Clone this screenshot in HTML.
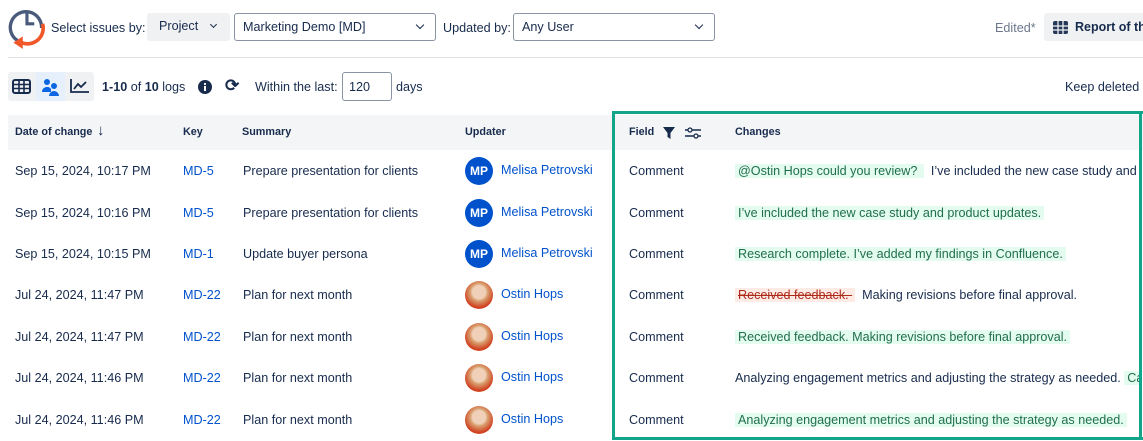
<!DOCTYPE html>
<html><head><meta charset="utf-8"><style>
*{box-sizing:border-box;margin:0;padding:0}
body{width:1143px;height:441px;overflow:hidden;background:#fff;font-family:"Liberation Sans",sans-serif;font-size:12.6px;color:#172b4d;position:relative}
.a{position:absolute;white-space:nowrap}
.dd{position:absolute;border:1px solid #8993a4;border-radius:3px;height:28px;padding:6px 8px;font-size:12.6px}
.chev{position:absolute;right:12px;top:8px;width:6px;height:6px;border-right:1.6px solid #172b4d;border-bottom:1.6px solid #172b4d;transform:rotate(45deg)}
.hd{position:absolute;top:115px;left:8px;width:1135px;height:35px;background:#f4f5f7}
.th{position:absolute;top:126px;font-size:10.8px;font-weight:bold;color:#172b4d}
.link{color:#0052cc}
.av{position:absolute;width:28px;height:28px;border-radius:50%;background:#0052cc;color:#fff;font-weight:bold;font-size:12px;text-align:center;line-height:28px}
.av2{background:radial-gradient(circle at 50% 40%,#f0d0b8 0 30%,#d9a070 40%,#d04020 70%,#f08040 100%)}
.g{background:#e3fcef;color:#216e4e;padding:2px 3px}
.r{background:#ffebe6;color:#ae2a19;text-decoration:line-through;padding:2px 3px}
</style></head><body>
<svg class="a" style="left:8px;top:3px" width="40" height="48" viewBox="0 0 36 46">
<path d="M8 36 A15 15 0 1 1 31 24" fill="none" stroke="#4a5a7a" stroke-width="3.2"/>
<path d="M17 9 V20 H24" fill="none" stroke="#4a5a7a" stroke-width="3"/>
<path d="M32 20 A15 15 0 0 1 12 38" fill="none" stroke="#f0582a" stroke-width="3.5"/>
<path d="M4 38 L13 32 L13 44 Z" fill="#f0582a"/>
</svg>
<div class="a" style="left:51px;top:21px">Select issues by:</div>
<div class="a" style="left:147px;top:13px;width:83px;height:28px;background:#f0f1f3;border-radius:3px;padding:6px 12px;font-size:12.6px">Project<span class="chev" style="right:14px;top:9px;width:5px;height:5px"></span></div>
<div class="dd" style="left:234px;top:13px;width:202px">Marketing Demo [MD]<span class="chev"></span></div>
<div class="a" style="left:443px;top:21px">Updated by:</div>
<div class="dd" style="left:513px;top:13px;width:202px">Any User<span class="chev"></span></div>
<div class="a" style="left:995px;top:21px;color:#6b778c">Edited*</div>
<div class="a" style="left:1044px;top:13px;width:110px;height:28px;background:#f0f1f3;border-radius:3px"></div>
<svg class="a" style="left:1052px;top:20px" width="17" height="15"><rect x="1" y="1" width="15" height="13" rx="2" fill="#253858"/><path d="M1 6H16M1 10H16M6 1V14M11 1V14" stroke="#f0f1f3" stroke-width="1.3"/></svg>
<div class="a" style="left:1075px;top:20px;font-weight:bold;font-size:12.5px">Report of the</div>
<div class="a" style="left:8px;top:57px;width:1135px;height:1px;background:#dfe1e6"></div>

<div class="a" style="left:8px;top:72px;width:86px;height:29px;background:#f0f1f3;border-radius:3px"></div>
<div class="a" style="left:36px;top:72px;width:29px;height:29px;background:#e6effc"></div>
<svg class="a" style="left:12px;top:79px" width="20" height="16"><rect x="1" y="1" width="17" height="13" rx="2" fill="none" stroke="#172b4d" stroke-width="2"/><path d="M1 5.5H18M1 9.5H18M7 1V14M12 1V14" stroke="#172b4d" stroke-width="1.6"/></svg>
<svg class="a" style="left:41px;top:78px" width="20" height="18"><circle cx="6" cy="4" r="3" fill="#0c66e4"/><circle cx="13" cy="8" r="3" fill="#0c66e4"/><path d="M1 14a5 5 0 0 1 9-3v3z" fill="#0c66e4"/><path d="M8 18a5 5 0 0 1 10 0z" fill="#0c66e4"/></svg>
<svg class="a" style="left:70px;top:78px" width="20" height="16"><path d="M1 1V14H19" fill="none" stroke="#172b4d" stroke-width="1.8"/><path d="M4 11L8 6L11 9L16 4" fill="none" stroke="#172b4d" stroke-width="1.8"/></svg>
<div class="a" style="left:102px;top:80px"><b>1-10</b> of <b>10</b> logs</div>
<svg class="a" style="left:198px;top:80px" width="14" height="14"><circle cx="7" cy="7" r="7" fill="#172b4d"/><rect x="6" y="6" width="2" height="5" fill="#fff"/><circle cx="7" cy="4" r="1.1" fill="#fff"/></svg>
<div class="a" style="left:225px;top:76px;font-size:17px;font-weight:bold">⟳</div>
<div class="a" style="left:255px;top:80px">Within the last:</div>
<div class="a" style="left:342px;top:72px;width:50px;height:29px;border:1px solid #8993a4;border-radius:3px;padding:7px 6px">120</div>
<div class="a" style="left:396px;top:80px">days</div>
<div class="a" style="left:1065px;top:80px">Keep deleted i</div>

<div class="hd"></div>
<div class="th" style="left:15px">Date of change</div>
<div class="a" style="left:97px;top:122px;font-size:15px">↓</div>
<div class="th" style="left:183px">Key</div>
<div class="th" style="left:242px">Summary</div>
<div class="th" style="left:465px">Updater</div>
<div class="th" style="left:629px">Field</div>
<svg class="a" style="left:662px;top:126px" width="40" height="14"><path d="M1 1H13L8.5 7V13L5.5 11V7Z" fill="#172b4d"/><path d="M23 4H39M23 10H39" stroke="#172b4d" stroke-width="1.4"/><circle cx="28" cy="4" r="2" fill="#f4f5f7" stroke="#172b4d" stroke-width="1.3"/><circle cx="34" cy="10" r="2" fill="#f4f5f7" stroke="#172b4d" stroke-width="1.3"/></svg>
<div class="th" style="left:735px">Changes</div>

<div id="rows"></div>
<div class="a" style="left:612px;top:111px;width:531px;height:329px;border:3px solid #13a589;border-right:none"></div>
<div class="a" style="left:1139px;top:111px;width:3px;height:329px;background:#13a589"></div>
<script>
var d=[["Sep 15, 2024, 10:17 PM","MD-5","Prepare presentation for clients",0,'<span class="g">@Ostin Hops could you review? </span>&nbsp; I’ve included the new case study and pr'],
["Sep 15, 2024, 10:16 PM","MD-5","Prepare presentation for clients",0,'<span class="g">I’ve included the new case study and product updates.</span>'],
["Sep 15, 2024, 10:15 PM","MD-1","Update buyer persona",0,'<span class="g">Research complete. I’ve added my findings in Confluence.</span>'],
["Jul 24, 2024, 11:47 PM","MD-22","Plan for next month",1,'<span class="r">Received feedback. </span>&nbsp; Making revisions before final approval.'],
["Jul 24, 2024, 11:47 PM","MD-22","Plan for next month",1,'<span class="g">Received feedback. Making revisions before final approval.</span>'],
["Jul 24, 2024, 11:46 PM","MD-22","Plan for next month",1,'Analyzing engagement metrics and adjusting the strategy as needed. <span class="g">Ca</span>'],
["Jul 24, 2024, 11:46 PM","MD-22","Plan for next month",1,'<span class="g">Analyzing engagement metrics and adjusting the strategy as needed.</span>']];
var h="",ys=[171,213,254,295,337,378,420];
d.forEach(function(r,i){var y=ys[i]-7;
h+='<div class="a" style="left:15px;top:'+y+'px">'+r[0]+'</div><div class="a link" style="left:183px;top:'+y+'px">'+r[1]+'</div><div class="a" style="left:243px;top:'+y+'px">'+r[2]+'</div>';
h+=r[3]?'<div class="av av2" style="left:465px;top:'+(ys[i]-14)+'px"></div><div class="a link" style="left:501px;top:'+(y-1)+'px">Ostin Hops</div>':'<div class="av" style="left:465px;top:'+(ys[i]-14)+'px">MP</div><div class="a link" style="left:501px;top:'+(y-1)+'px">Melisa Petrovski</div>';
h+='<div class="a" style="left:629px;top:'+y+'px">Comment</div><div class="a" style="left:735px;top:'+y+'px;width:404px;overflow:hidden">'+r[4]+'</div>';});
document.getElementById("rows").innerHTML=h;
</script>
</body></html>
